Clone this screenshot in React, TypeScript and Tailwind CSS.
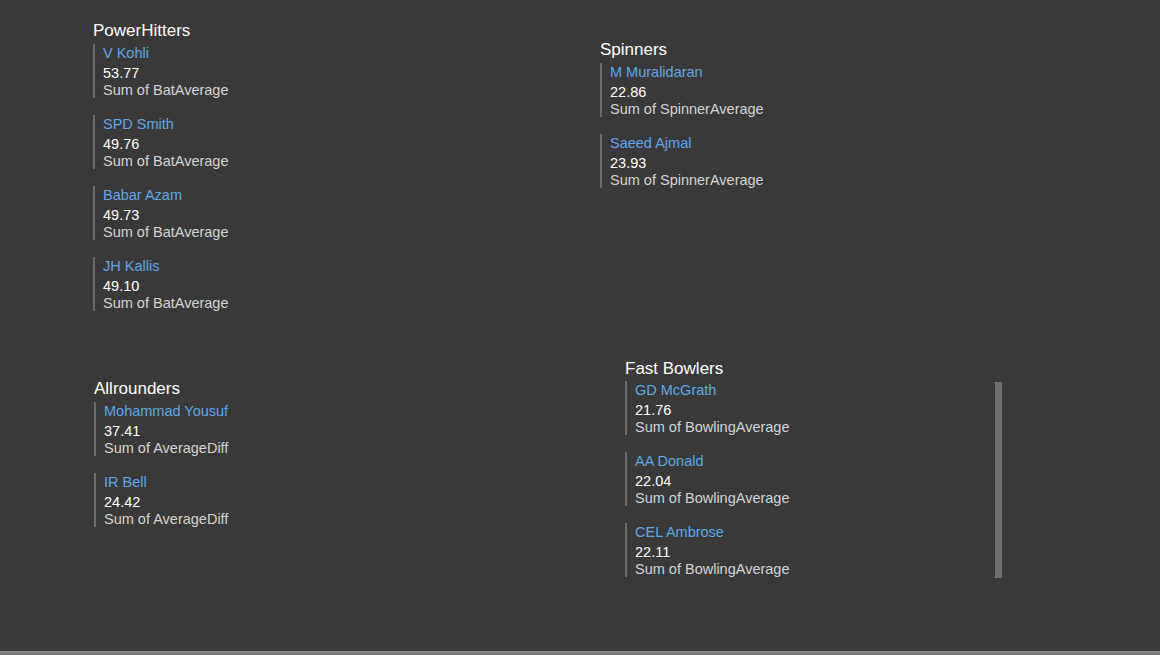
type Item = { name: string; value: string; label: string };

const powerHitters: Item[] = [
  { name: "V Kohli", value: "53.77", label: "Sum of BatAverage" },
  { name: "SPD Smith", value: "49.76", label: "Sum of BatAverage" },
  { name: "Babar Azam", value: "49.73", label: "Sum of BatAverage" },
  { name: "JH Kallis", value: "49.10", label: "Sum of BatAverage" },
];

const spinners: Item[] = [
  { name: "M Muralidaran", value: "22.86", label: "Sum of SpinnerAverage" },
  { name: "Saeed Ajmal", value: "23.93", label: "Sum of SpinnerAverage" },
];

const allrounders: Item[] = [
  { name: "Mohammad Yousuf", value: "37.41", label: "Sum of AverageDiff" },
  { name: "IR Bell", value: "24.42", label: "Sum of AverageDiff" },
];

const fastBowlers: Item[] = [
  { name: "GD McGrath", value: "21.76", label: "Sum of BowlingAverage" },
  { name: "AA Donald", value: "22.04", label: "Sum of BowlingAverage" },
  { name: "CEL Ambrose", value: "22.11", label: "Sum of BowlingAverage" },
];

function CardList({ items }: { items: Item[] }) {
  return (
    <div className="flex flex-col gap-[17px]">
      {items.map((it) => (
        <div key={it.name} className="border-l-2 border-[#6c6c6c] pl-[8px] text-[14.5px]">
          <div className="leading-[18px] text-[#5fa8e8]">{it.name}</div>
          <div className="mt-[3px] leading-[17px] text-white">{it.value}</div>
          <div className="leading-[16px] text-[#d4d4d4]">{it.label}</div>
        </div>
      ))}
    </div>
  );
}

function Panel({ title, items }: { title: string; items: Item[] }) {
  return (
    <div>
      <h2 className="mb-[3px] text-[17px] leading-[20px] text-white">{title}</h2>
      <CardList items={items} />
    </div>
  );
}

export default function App() {
  return (
    <div
      className="flex h-[655px] w-full flex-col overflow-hidden bg-[#393939]"
      style={{ fontFamily: '"Liberation Sans", Arial, sans-serif' }}
    >
      <div className="flex h-[359px] pl-[93px]">
        <div className="w-[507px] pt-[21px]">
          <Panel title="PowerHitters" items={powerHitters} />
        </div>
        <div className="pt-[40px]">
          <Panel title="Spinners" items={spinners} />
        </div>
      </div>

      <div className="flex pl-[94px]">
        <div className="w-[531px] pt-[20px]">
          <Panel title="Allrounders" items={allrounders} />
        </div>
        <div>
          <h2 className="mb-[2px] text-[17px] leading-[20px] text-white">Fast Bowlers</h2>
          <div className="flex">
            <div className="w-[370px]">
              <CardList items={fastBowlers} />
            </div>
            <div className="mt-[1px] h-[196px] w-[7px] bg-[#6f6f6f]" />
          </div>
        </div>
      </div>

      <div className="mt-auto h-[4px] w-full bg-gradient-to-b from-[#8a8a8a] to-[#6e6e6e]" />
    </div>
  );
}
